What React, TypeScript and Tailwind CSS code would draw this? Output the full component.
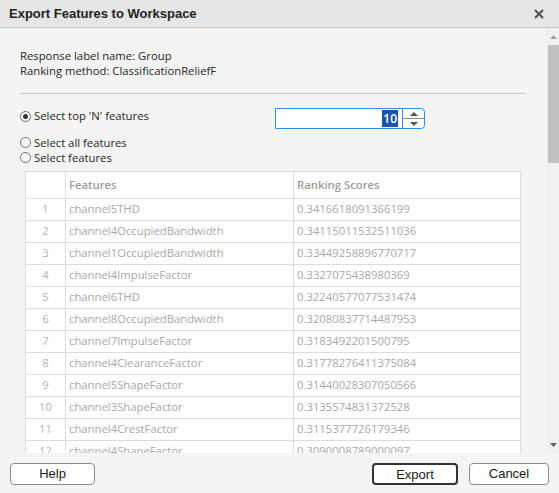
const rows = [
  ["channel5THD", "0.3416618091366199"],
  ["channel4OccupiedBandwidth", "0.34115011532511036"],
  ["channel1OccupiedBandwidth", "0.33449258896770717"],
  ["channel4ImpulseFactor", "0.3327075438980369"],
  ["channel6THD", "0.32240577077531474"],
  ["channel8OccupiedBandwidth", "0.32080837714487953"],
  ["channel7ImpulseFactor", "0.3183492201500795"],
  ["channel4ClearanceFactor", "0.31778276411375084"],
  ["channel5ShapeFactor", "0.31440028307050566"],
  ["channel3ShapeFactor", "0.3135574831372528"],
  ["channel4CrestFactor", "0.3115377726179346"],
  ["channel4ShapeFactor", "0.3090008789000097"],
];

function Radio({ checked, label }: { checked?: boolean; label: string }) {
  return (
    <label className="flex items-center gap-[3px] h-[15px]">
      <span className="w-[11px] h-[11px] rounded-full border border-[#6e6e6e] bg-white flex items-center justify-center">
        {checked && <span className="w-[5px] h-[5px] rounded-full bg-[#333]" />}
      </span>
      <span>{label}</span>
    </label>
  );
}

export default function App() {
  return (
    <div
      className="w-[559px] h-[493px] flex flex-col bg-[#f4f4f4] overflow-hidden text-[11.3px] text-[#262626]"
      style={{ fontFamily: "'Open Sans', 'Noto Sans', sans-serif" }}
    >
      {/* Title bar */}
      <div className="h-[28px] shrink-0 bg-[#e6e6e6] border-b border-[#c4c4c4] flex items-center justify-between pl-[9px] pr-[15px]">
        <span className="font-bold text-[13px] text-[#222]" style={{ fontFamily: "'Liberation Sans', Arial, sans-serif" }}>
          Export Features to Workspace
        </span>
        <svg width="10" height="10" viewBox="0 0 10 10">
          <path d="M1 1L9 9M9 1L1 9" stroke="#555" strokeWidth="2.2" />
        </svg>
      </div>

      {/* Body */}
      <div className="flex flex-1 min-h-0">
        <div className="flex-1 min-w-0 overflow-hidden pl-[20px] pr-[20px] pt-[20px]">
          <div className="leading-[15px]">
            <div>Response label name: Group</div>
            <div>Ranking method: ClassificationReliefF</div>
          </div>
          <div className="mt-[15px] h-px bg-[#c8c8c8]" />

          <div className="mt-[14px] flex items-start h-[21px]">
            <div className="w-[255px] pt-px">
              <Radio checked label="Select top 'N' features" />
            </div>
            <div className="w-[150px] h-[21px] flex border border-[#2d8fe6] rounded-r-[4px] bg-white">
              <div className="flex-1 flex items-center justify-end pr-[4px]">
                <span className="bg-[#1a56a8] text-white font-semibold text-[12px] leading-[17px] px-px">10</span>
              </div>
              <div className="w-[22px] border-l border-[#2d8fe6] flex flex-col">
                <div className="flex-1 flex items-center justify-center border-b border-[#8a8a8a]">
                  <svg width="8" height="4" viewBox="0 0 8 4"><path d="M0 4L4 0L8 4Z" fill="#555" /></svg>
                </div>
                <div className="flex-1 flex items-center justify-center">
                  <svg width="8" height="4" viewBox="0 0 8 4"><path d="M0 0L8 0L4 4Z" fill="#555" /></svg>
                </div>
              </div>
            </div>
          </div>

          <div className="mt-[6px] leading-[15px]">
            <Radio label="Select all features" />
            <Radio label="Select features" />
          </div>

          <table className="mt-[6px] ml-[5px] w-[495px] border-collapse bg-white text-[#a8a8a8] table-fixed">
            <colgroup>
              <col className="w-[40px]" />
              <col className="w-[228px]" />
              <col className="w-[227px]" />
            </colgroup>
            <thead>
              <tr className="h-[27px]">
                <th className="border border-[#dcdcdc]" />
                <th className="border border-[#dcdcdc] text-left pl-[3px] font-semibold text-[#9c9c9c]">Features</th>
                <th className="border border-[#dcdcdc] text-left pl-[3px] font-semibold text-[#9c9c9c]">Ranking Scores</th>
              </tr>
            </thead>
            <tbody>
              {rows.map(([name, score], i) => (
                <tr key={name} className="h-[22px]">
                  <td className="border border-[#dcdcdc] text-center text-[#b4b4b4] p-0">{i + 1}</td>
                  <td className="border border-[#dcdcdc] pl-[3px] p-0 whitespace-nowrap">{name}</td>
                  <td className="border border-[#dcdcdc] pl-[3px] p-0 whitespace-nowrap">{score}</td>
                </tr>
              ))}
            </tbody>
          </table>
        </div>

        {/* Scrollbar */}
        <div className="w-[13px] shrink-0 bg-[#f0f0f0] flex flex-col items-center">
          <div className="h-[17px] flex items-center justify-center pl-[2px]">
            <svg width="7" height="4" viewBox="0 0 7 4"><path d="M0 4L3.5 0L7 4Z" fill="#a0a0a0" /></svg>
          </div>
          <div className="h-[118px] w-[11px] ml-[2px] bg-[#c1c1c1]" />
          <div className="flex-1" />
          <div className="h-[17px] flex items-center justify-center pl-[2px]">
            <svg width="7" height="4" viewBox="0 0 7 4"><path d="M0 0L7 0L3.5 4Z" fill="#606060" /></svg>
          </div>
        </div>
      </div>

      {/* Footer */}
      <div
        className="h-[40px] shrink-0 flex items-start pt-[10px] px-[10px] text-[13px] text-[#1a1a1a]"
        style={{ fontFamily: "'Liberation Sans', Arial, sans-serif" }}
      >
        <button className="w-[85px] h-[22px] rounded-[4px] border border-[#8c8c8c] bg-white">Help</button>
        <div className="flex-1" />
        <button className="w-[86px] h-[22px] rounded-[4px] border-2 border-[#333] bg-white">Export</button>
        <button className="ml-[11px] w-[80px] h-[22px] rounded-[4px] border border-[#8c8c8c] bg-white">Cancel</button>
      </div>
    </div>
  );
}
